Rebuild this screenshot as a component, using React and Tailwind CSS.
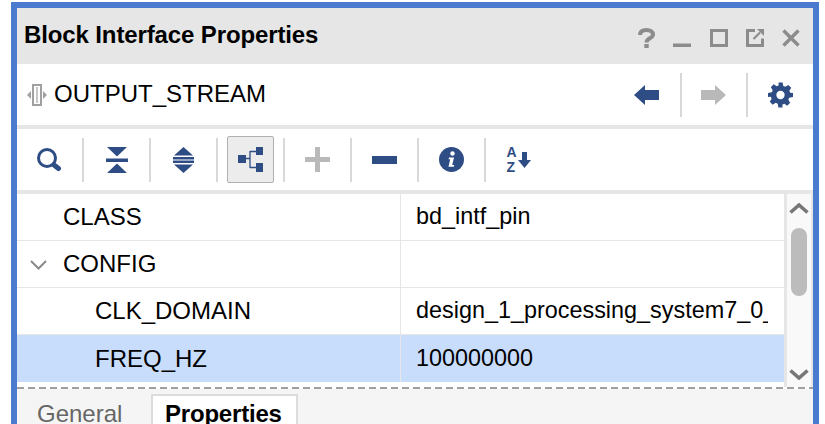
const NAVY = "#2f4d85";
const GRAY = "#b9b9b9";
const WIN = "#8c8c8c";

function Sep({ className = "h-[44px]" }) {
  return <div className={`w-[2px] shrink-0 bg-[#d8d8d8] ${className}`} />;
}

function ToolItem({ active, children }) {
  return (
    <div className="flex w-[65px] shrink-0 items-center justify-center">
      {active ? (
        <div className="flex h-[47px] w-[47px] items-center justify-center rounded-[2px] border border-[#b0b0b0] bg-[#ececec]">
          {children}
        </div>
      ) : (
        children
      )}
    </div>
  );
}

const rows = [
  { name: "CLASS", value: "bd_intf_pin", pad: "pl-[46px]" },
  { name: "CONFIG", value: "", pad: "pl-[46px]", open: true },
  { name: "CLK_DOMAIN", value: "design_1_processing_system7_0_FCLK_CLK0", pad: "pl-[78px]" },
  { name: "FREQ_HZ", value: "100000000", pad: "pl-[78px]", selected: true },
];

function Row({ row }) {
  return (
    <div className={`relative flex h-[47px] border-b border-[#e6e6e6] text-black ${row.selected ? "border-b-0 bg-[#c8dcfb]" : ""}`}>
      {row.open && (
        <svg className="absolute left-[13px] top-[18px]" width="17" height="12" viewBox="0 0 17 12">
          <path d="M1 2 8.5 9.5 16 2" fill="none" stroke="#8a8a8a" strokeWidth="2" />
        </svg>
      )}
      <div className={`flex w-[384px] shrink-0 items-center border-r border-[#e6e6e6] text-[24px] ${row.pad}`}>{row.name}</div>
      <div className="flex w-[367px] items-center overflow-hidden whitespace-nowrap pl-[15px] text-[23.4px]">{row.value}</div>
    </div>
  );
}

export default function App() {
  return (
    <div className="h-[424px] w-[825px] overflow-hidden bg-white pl-[11px] pt-[2px] font-['Liberation_Sans',Arial,sans-serif]">
      <div className="flex h-[422px] w-[808px] flex-col border-[6px] border-b-0 border-[#4a7bcf]">
        {/* title bar */}
        <div className="flex h-[56px] shrink-0 items-center justify-between bg-[#e6e6e6] pl-[7px] pr-[13px]">
          <span className="mb-[2px] text-[24px] font-bold leading-none tracking-[-0.12px] text-black">Block Interface Properties</span>
          <div className="mt-[4px] flex items-center gap-[18px]">
            <svg width="17" height="20" viewBox="0 0 17 20" fill="none">
              <path d="M2 7C2 3.5 4.8 2 8.5 2S15 3.7 15 6.5c0 4-6.5 3.6-6.5 8" stroke={WIN} strokeWidth="4" />
              <rect x="6.3" y="16" width="4.4" height="4" fill={WIN} />
            </svg>
            <svg width="19" height="20" viewBox="0 0 19 20"><rect x="0" y="15.5" width="18" height="3.5" fill={WIN} /></svg>
            <svg width="18" height="20" viewBox="0 0 18 20" fill="none"><rect x="1.5" y="2.5" width="15" height="15" stroke={WIN} strokeWidth="3" /></svg>
            <svg width="18" height="20" viewBox="0 0 18 20" fill="none">
              <path d="M9 2.5H1.5v15h15v-7" stroke={WIN} strokeWidth="3" />
              <path d="M7.5 11 14 4.5" stroke={WIN} strokeWidth="2.2" />
              <path d="M11 1h7v7z" fill={WIN} />
            </svg>
            <svg width="18" height="20" viewBox="0 0 18 20" fill="none"><path d="M1.5 2.5 16.5 17.5M16.5 2.5 1.5 17.5" stroke={WIN} strokeWidth="3.4" /></svg>
          </div>
        </div>

        {/* object row */}
        <div className="flex h-[61px] shrink-0 items-center justify-between pl-[10px]">
          <div className="flex items-center gap-[7px]">
            <svg width="20" height="22" viewBox="0 0 20 22" fill="none">
              <path d="M0 11 4 7v8zM20 11l-4-4v8z" fill="#a0a0a0" />
              <rect x="6" y="1" width="8" height="20" stroke="#a0a0a0" strokeWidth="2" />
              <rect x="9" y="3" width="2" height="16" fill="#c8c8c8" />
            </svg>
            <span className="mb-[2px] text-[24px] leading-none text-black">OUTPUT_STREAM</span>
          </div>
          <div className="flex items-center">
            <svg width="25" height="20" viewBox="0 0 25 20"><path d="M0 10 11 0v5h14v10H11v5z" fill={NAVY} /></svg>
            <Sep className="ml-[21px] h-[44px]" />
            <svg className="ml-[19px]" width="25" height="20" viewBox="0 0 25 20"><path d="M25 10 14 0v5H0v10h14v5z" fill={GRAY} /></svg>
            <Sep className="ml-[20px] h-[44px]" />
            <svg className="ml-[20px] mr-[20px]" width="25" height="26" viewBox="0 0 24 24">
              <path
                fill={NAVY}
                fillRule="evenodd"
                d="M10 0h4l.7 3.3 1.9.8 2.9-1.8 2.8 2.8-1.8 2.9.8 1.9L24 10v4l-3.7.7-.8 1.9 1.8 2.9-2.8 2.8-2.9-1.8-1.9.8L14 24h-4l-.7-3.7-1.9-.8-2.9 1.8-2.8-2.8 1.8-2.9-.8-1.9L0 14v-4l3.7-.7.8-1.9-1.8-2.9 2.8-2.8 2.9 1.8 1.9-.8zM12 8a4 4 0 1 0 0 8 4 4 0 0 0 0-8z"
              />
            </svg>
          </div>
        </div>
        <div className="h-[4px] shrink-0 bg-[#e6e6e6]" />

        {/* toolbar */}
        <div className="flex h-[61px] shrink-0 items-center">
          <ToolItem>
            <svg width="25" height="24" viewBox="0 0 25 24" fill="none">
              <circle cx="10" cy="10" r="8.5" stroke={NAVY} strokeWidth="3" />
              <path d="M17 17l4.5 3.5" stroke={NAVY} strokeWidth="5" strokeLinecap="round" />
            </svg>
          </ToolItem>
          <Sep />
          <ToolItem>
            <svg width="22" height="26" viewBox="0 0 22 26" fill={NAVY}>
              <path d="M1 0h20L11 9.5zM1 26h20L11 16.5z" />
              <rect x="0" y="11.5" width="22" height="3.5" />
            </svg>
          </ToolItem>
          <Sep />
          <ToolItem>
            <svg width="21" height="26" viewBox="0 0 21 26" fill={NAVY}>
              <path d="M10.5 0 20 8.5H1zM10.5 26 20 17.5H1z" />
              <rect x="0" y="10" width="21" height="2.5" />
              <rect x="0" y="13.5" width="21" height="2.5" />
            </svg>
          </ToolItem>
          <Sep />
          <ToolItem active>
            <svg width="25" height="25" viewBox="0 0 25 25" fill={NAVY}>
              <rect x="0" y="8" width="8" height="8" />
              <rect x="18" y="0" width="7" height="8" />
              <rect x="18" y="16" width="7" height="9" />
              <path d="M8 11.5h4M12 4.5h6M12 20.5h6M12 4v17" stroke={NAVY} strokeWidth="1.3" fill="none" />
            </svg>
          </ToolItem>
          <Sep />
          <ToolItem>
            <svg width="25" height="25" viewBox="0 0 25 25" fill={GRAY}>
              <rect x="0" y="10" width="25" height="5" />
              <rect x="10" y="0" width="5" height="25" />
            </svg>
          </ToolItem>
          <Sep />
          <ToolItem>
            <svg width="25" height="8" viewBox="0 0 25 8"><rect width="25" height="8" fill={NAVY} /></svg>
          </ToolItem>
          <Sep />
          <ToolItem>
            <svg width="25" height="25" viewBox="0 0 25 25">
              <circle cx="12.5" cy="12.5" r="12.5" fill={NAVY} />
              <circle cx="13.5" cy="6.5" r="2.2" fill="#fff" />
              <path d="M10 10.5h5l-1.8 7.5h2l-.4 1.8H9.5l1.7-7.5H9.6z" fill="#fff" />
            </svg>
          </ToolItem>
          <Sep />
          <ToolItem>
            <div className="relative h-[26px] w-[24px]">
              <span className="absolute left-0 top-[-2px] text-[14px] font-bold leading-[14px] text-[#2f4d85]">A</span>
              <span className="absolute left-0 top-[13px] text-[14px] font-bold leading-[14px] text-[#2f4d85]">Z</span>
              <svg className="absolute right-0 top-[5px]" width="13" height="16" viewBox="0 0 13 16"><path d="M4 0h5v8h4l-6.5 8L0 8h4z" fill={NAVY} /></svg>
            </div>
          </ToolItem>
        </div>
        <div className="h-[4px] shrink-0 bg-[#e6e6e6]" />

        {/* properties table */}
        <div className="flex h-[193px] shrink-0">
          <div className="w-[767px] shrink-0">
            {rows.map((row) => (
              <Row key={row.name} row={row} />
            ))}
          </div>
          <div className="flex flex-1 flex-col items-center border-x-[2px] border-l-[3px] border-[#e6e6e6] bg-[#f9f9f9] pt-[9px]">
            <svg width="20" height="11" viewBox="0 0 20 11"><path d="M1.5 9.5 10 2l8.5 7.5" fill="none" stroke="#777" strokeWidth="3.6" /></svg>
            <div className="mt-[14px] h-[68px] w-[16px] rounded-full bg-[#bcbcbc]" />
            <svg className="mt-[73px]" width="20" height="11" viewBox="0 0 20 11"><path d="M1.5 1.5 10 9l8.5-7.5" fill="none" stroke="#777" strokeWidth="3.6" /></svg>
          </div>
        </div>
        <div className="h-[2px] shrink-0 bg-[repeating-linear-gradient(90deg,#a0a0a0_0,#a0a0a0_7px,transparent_7px,transparent_11px)]" />

        {/* tabs */}
        <div className="flex flex-1 items-start overflow-hidden bg-[#f5f5f5] pt-[5px]">
          <div className="w-[134px] shrink-0 pl-[20px] pt-[7px] text-[24px] leading-[26px] text-[#666]">General</div>
          <div className="h-[40px] w-[147px] border-2 border-[#dcdcdc] bg-white pl-[12px] pt-[5px] text-[24px] font-bold leading-[26px] tracking-[-0.2px] text-black">
            Properties
          </div>
        </div>
      </div>
    </div>
  );
}
